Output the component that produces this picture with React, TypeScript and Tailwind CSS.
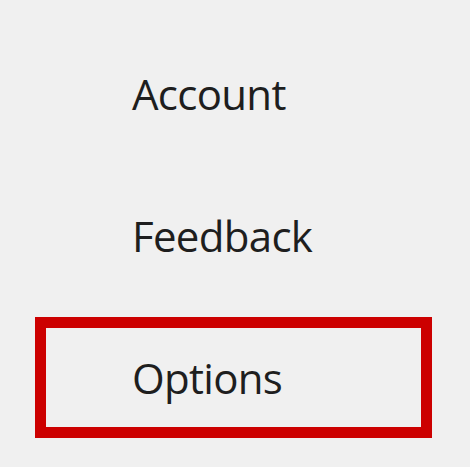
import React from 'react'

const items = [
    { label: 'Account', selected: false },
    { label: 'Feedback', selected: false },
    { label: 'Options', selected: true },
]

export default function App() {
    return (
        <div className="flex h-[467px] w-[474px] bg-[#f0f0f0]">
            <div className="flex flex-1 flex-col gap-[21px] pl-[35px] pt-[33px]">
                {items.map((item, index) => (
                    <div
                        key={index}
                        className={
                            item.selected
                                ? 'flex h-[121px] w-[397px] items-center border-[11px] border-[#cc0000] pl-[86px]'
                                : 'flex h-[121px] w-[397px] items-center border-[11px] border-transparent pl-[86px]'
                        }
                    >
                        <span className="font-['Open_Sans',sans-serif] text-[42px] leading-none tracking-[-0.7px] text-[#1e1e1e]">
                            {item.label}
                        </span>
                    </div>
                ))}
            </div>
            <div className="w-[4px] bg-white" />
        </div>
    )
}
